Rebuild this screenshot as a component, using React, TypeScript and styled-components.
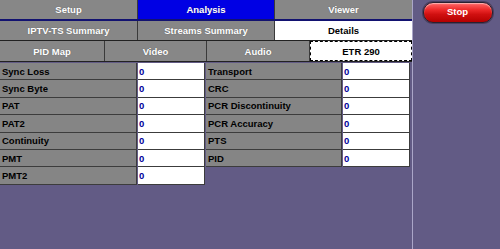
import React from "react";
import styled, { createGlobalStyle } from "styled-components";

const Global = createGlobalStyle`
  html, body { margin: 0; padding: 0; }
  body { background: #625b85; font-family: "Liberation Sans", Arial, sans-serif; }
`;

const Screen = styled.div`
  width: 500px;
  height: 249px;
  display: flex;
  background: #625b85;
  overflow: hidden;
`;

const Main = styled.div`
  width: 412px;
  display: flex;
  flex-direction: column;
  border-right: 1px solid #aaa6c8;
`;

const Side = styled.div`
  flex: 1;
  display: flex;
  flex-direction: column;
  align-items: center;
  padding-top: 2px;
  padding-left: 2px;
`;

const TabRow = styled.div<{ $cols: string; $h: number; $line: string; $lw: number }>`
  display: grid;
  grid-template-columns: ${(p) => p.$cols};
  gap: 1px;
  background: #3a3a3a;
  height: ${(p) => p.$h}px;
  border-bottom: ${(p) => p.$lw}px solid ${(p) => p.$line};
`;

const Tab = styled.div<{ $variant?: "blue" | "white" | "dashed" }>`
  display: flex;
  align-items: center;
  justify-content: center;
  font-size: 9.5px;
  font-weight: bold;
  box-sizing: border-box;
  background: ${(p) =>
    p.$variant === "blue" ? "#0000e4" : p.$variant === "white" || p.$variant === "dashed" ? "#ffffff" : "#878787"};
  color: ${(p) => (p.$variant === "white" || p.$variant === "dashed" ? "#000" : "#fff")};
  text-shadow: ${(p) => (p.$variant === "white" || p.$variant === "dashed" ? "none" : "0 0 1px rgba(60,60,60,0.6)")};
  border: ${(p) => (p.$variant === "dashed" ? "1px dashed #000" : "none")};
`;

const Table = styled.div`
  display: grid;
  grid-template-columns: 137px 67px 136px 67px;
  grid-auto-rows: 17.4px;
  column-gap: 1px;
  margin-top: 1px;
`;

const Cell = styled.div<{ $value?: boolean }>`
  box-sizing: border-box;
  display: flex;
  align-items: center;
  padding-left: ${(p) => (p.$value ? "1px" : "2px")};
  font-size: 9.5px;
  font-weight: bold;
  background: ${(p) => (p.$value ? "#ffffff" : "#858585")};
  color: ${(p) => (p.$value ? "#00009a" : "#000000")};
  border-bottom: 1.4px solid #3c3c3c;
  border-right: 1px solid #3c3c3c;
`;

const Empty = styled.div``;

const StopButton = styled.button`
  width: 70px;
  height: 21px;
  border-radius: 10px;
  border: 1px solid #2a2030;
  background: linear-gradient(to bottom, #ff6a6a 0%, #ee2a2a 35%, #d01010 60%, #b40000 100%);
  box-shadow: inset 0 1px 1px rgba(255, 255, 255, 0.5), 0 0 0 1px #4a4060;
  color: #fff;
  font-family: "Liberation Sans", Arial, sans-serif;
  font-size: 9.5px;
  font-weight: bold;
  padding: 0 0 3px 0;
  cursor: pointer;
`;

const left = ["Sync Loss", "Sync Byte", "PAT", "PAT2", "Continuity", "PMT", "PMT2"];
const right = ["Transport", "CRC", "PCR Discontinuity", "PCR Accuracy", "PTS", "PID"];

export default function App() {
  return (
    <Screen>
      <Global />
      <Main>
        <TabRow $cols="137px 136px 137px" $h={19} $line="#121270" $lw={2}>
          <Tab>Setup</Tab>
          <Tab $variant="blue">Analysis</Tab>
          <Tab>Viewer</Tab>
        </TabRow>
        <TabRow $cols="137px 136px 137px" $h={19} $line="#222" $lw={1}>
          <Tab>IPTV-TS Summary</Tab>
          <Tab>Streams Summary</Tab>
          <Tab $variant="white">Details</Tab>
        </TabRow>
        <TabRow $cols="104px 101px 102px 102px" $h={20} $line="#222" $lw={1}>
          <Tab>PID Map</Tab>
          <Tab>Video</Tab>
          <Tab>Audio</Tab>
          <Tab $variant="dashed">ETR 290</Tab>
        </TabRow>
        <Table>
          {left.map((l, i) => (
            <React.Fragment key={l}>
              <Cell>{l}</Cell>
              <Cell $value>0</Cell>
              {right[i] ? (
                <>
                  <Cell>{right[i]}</Cell>
                  <Cell $value>0</Cell>
                </>
              ) : (
                <>
                  <Empty />
                  <Empty />
                </>
              )}
            </React.Fragment>
          ))}
        </Table>
      </Main>
      <Side>
        <StopButton>Stop</StopButton>
      </Side>
    </Screen>
  );
}
